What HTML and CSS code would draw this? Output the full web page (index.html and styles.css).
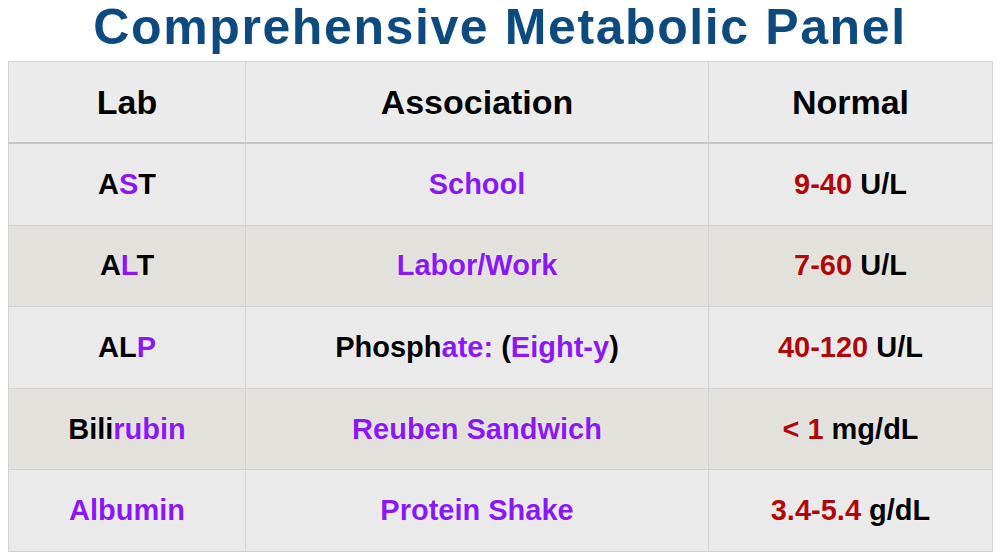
FILE: index.html
```html
<!DOCTYPE html>
<html>
<head>
<meta charset="utf-8">
<link rel="stylesheet" href="styles.css">
</head>
<body>
<div class="page">
  <h1 class="title">Comprehensive Metabolic Panel</h1>
  <table class="panel">
    <colgroup>
      <col class="c1"><col class="c2"><col class="c3">
    </colgroup>
    <thead>
      <tr class="head"><th>Lab</th><th>Association</th><th>Normal</th></tr>
    </thead>
    <tbody>
      <tr class="odd">
        <td>A<span class="p">S</span>T</td>
        <td><span class="p">School</span></td>
        <td><span class="r">9-40</span> U/L</td>
      </tr>
      <tr class="even">
        <td>A<span class="p">L</span>T</td>
        <td><span class="p">Labor/Work</span></td>
        <td><span class="r">7-60</span> U/L</td>
      </tr>
      <tr class="odd">
        <td>AL<span class="p">P</span></td>
        <td>Phosph<span class="p">ate:</span> (<span class="p">Eight-y</span>)</td>
        <td><span class="r">40-120</span> U/L</td>
      </tr>
      <tr class="even">
        <td>Bili<span class="p">rubin</span></td>
        <td><span class="p">Reuben Sandwich</span></td>
        <td><span class="r">&lt; 1</span> mg/dL</td>
      </tr>
      <tr class="odd">
        <td><span class="p">Albumin</span></td>
        <td><span class="p">Protein Shake</span></td>
        <td><span class="r">3.4-5.4</span> g/dL</td>
      </tr>
    </tbody>
  </table>
</div>
</body>
</html>
```

FILE: styles.css
```css
html, body {
  margin: 0;
  padding: 0;
  background: #ffffff;
}
.page {
  padding: 0 8px;
  font-family: "Liberation Sans", Arial, sans-serif;
}
.title {
  margin: 0;
  padding-bottom: 6px;
  height: 55px;
  line-height: 55px;
  text-align: center;
  font-size: 50px;
  font-weight: bold;
  color: #0c4a80;
  letter-spacing: 1.6px;
}
.panel {
  width: 984px;
  border-collapse: collapse;
  table-layout: fixed;
  border: 1px solid #bdbdbd;
}
.c1 { width: 237px; }
.c2 { width: 463px; }
.c3 { width: 284px; }
.panel th, .panel td {
  border: 1px solid #d2d2d2;
  text-align: center;
  vertical-align: middle;
  font-weight: bold;
  color: #000;
  text-shadow: 0 0 2px rgba(255,255,255,0.9);
  padding: 0;
}
.panel th {
  height: 80px;
  font-size: 34px;
  background: #ebebeb;
  border-bottom: 2px solid #c6c6c6;
}
.panel td {
  height: 80.6px;
  font-size: 29px;
}
.odd td { background: #eaeaea; }
.even td { background: #e2e1dc; }
.p { color: #8a17f5; }
.r { color: #b00808; }
```
